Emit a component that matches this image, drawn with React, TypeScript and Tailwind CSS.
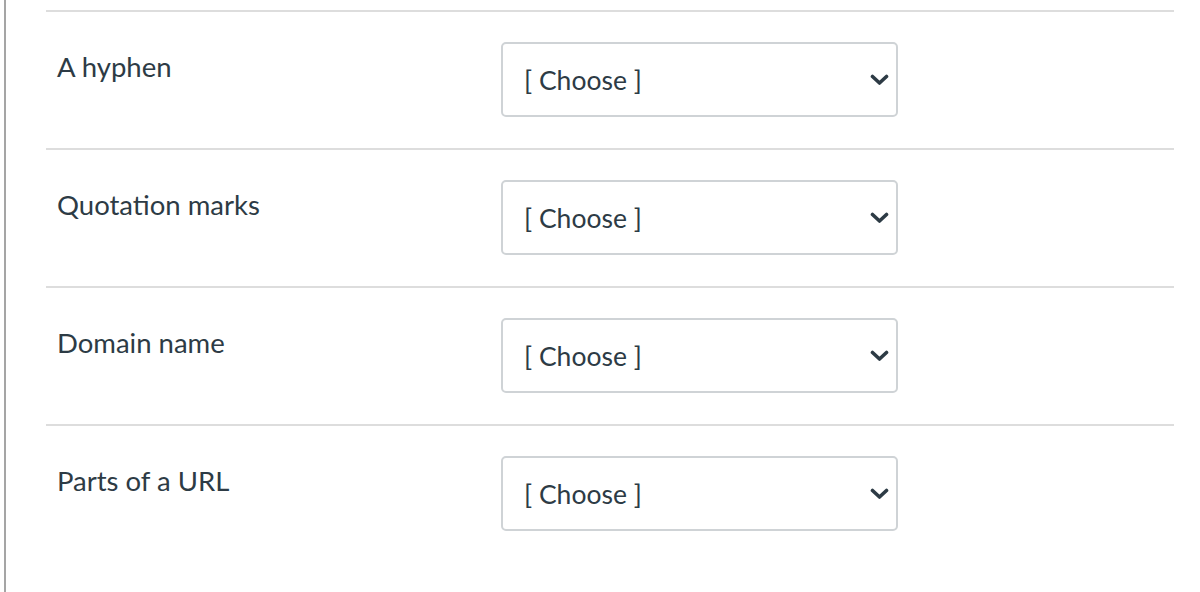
const rows = ['A hyphen', 'Quotation marks', 'Domain name', 'Parts of a URL'];

function ChooseBox() {
  return (
    <div className="w-[397px] h-[75px] border-2 border-[#cfd3d6] rounded-[5px] bg-white flex items-center justify-between pl-[21px] pr-[7px]">
      <span className="text-[26.5px] leading-none text-[#2d3b45] pt-[2px]">[ Choose ]</span>
      <svg width="19" height="12" viewBox="0 0 19 12" className="text-[#2d3b45]">
        <path d="M2.5 2.5 L9.5 9 L16.5 2.5" fill="none" stroke="currentColor" strokeWidth="3.6" strokeLinecap="round" strokeLinejoin="round" />
      </svg>
    </div>
  );
}

export default function App() {
  return (
    <div className="h-[592px] bg-white overflow-hidden" style={{ fontFamily: 'Lato, "Noto Sans", sans-serif' }}>
      <div className="ml-[4px] h-full border-l-2 border-[#a5a5a5] pl-[40px] pr-[26px] pt-[10px]">
        {rows.map((label) => (
          <div key={label} className="h-[138px] border-t-2 border-[#dddddd] flex items-start pl-[11px]">
            <div className="w-[444px] mt-[36px] text-[27.5px] leading-[38px] text-[#2d3b45]">{label}</div>
            <div className="mt-[30px]">
              <ChooseBox />
            </div>
          </div>
        ))}
      </div>
    </div>
  );
}
